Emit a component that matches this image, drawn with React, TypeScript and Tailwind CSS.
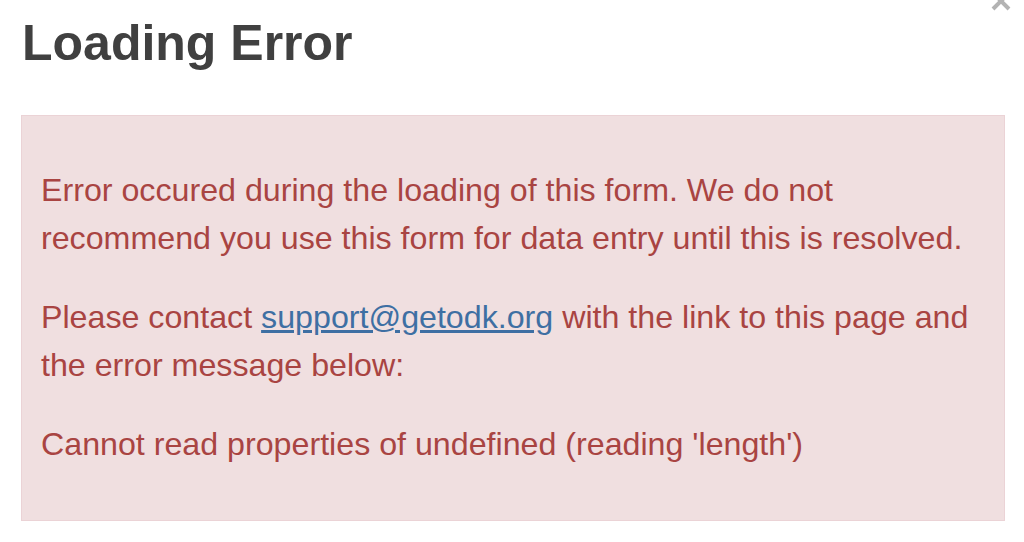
export default function App() {
  return (
    <div className="relative w-[1024px] h-[542px] overflow-hidden bg-white font-['Liberation_Sans',Arial,sans-serif]">
      {/* close button, cut off at the top edge */}
      <svg className="absolute left-[990px] top-[-10px] w-[22px] h-[22px]" viewBox="0 0 22 22">
        <path d="M3 3 L19 19 M19 3 L3 19" stroke="#b3b3b3" strokeWidth="4" strokeLinecap="butt" />
      </svg>

      <div className="pl-[21px] pr-[19px] pt-[14px]">
        <h1 className="text-[50px] leading-[58px] font-bold text-[#404040] pl-[1px]">Loading Error</h1>

        <div className="mt-[43px] h-[406px] bg-[#f0dfe0] border border-[#ebd3d6] px-[19px] pt-[50px] text-[32.2px] leading-[48px] text-[#a94442]">
          <p>
            Error occured during the loading of this form. We do not
            <br />
            recommend you use this form for data entry until this is resolved.
          </p>
          <p className="mt-[31px]">
            Please contact{" "}
            <a href="#" className="text-[#3e6fa3] underline">support@getodk.org</a>{" "}
            with the link to this page and
            <br />
            the error message below:
          </p>
          <p className="mt-[31px]">Cannot read properties of undefined (reading 'length')</p>
        </div>
      </div>
    </div>
  );
}
